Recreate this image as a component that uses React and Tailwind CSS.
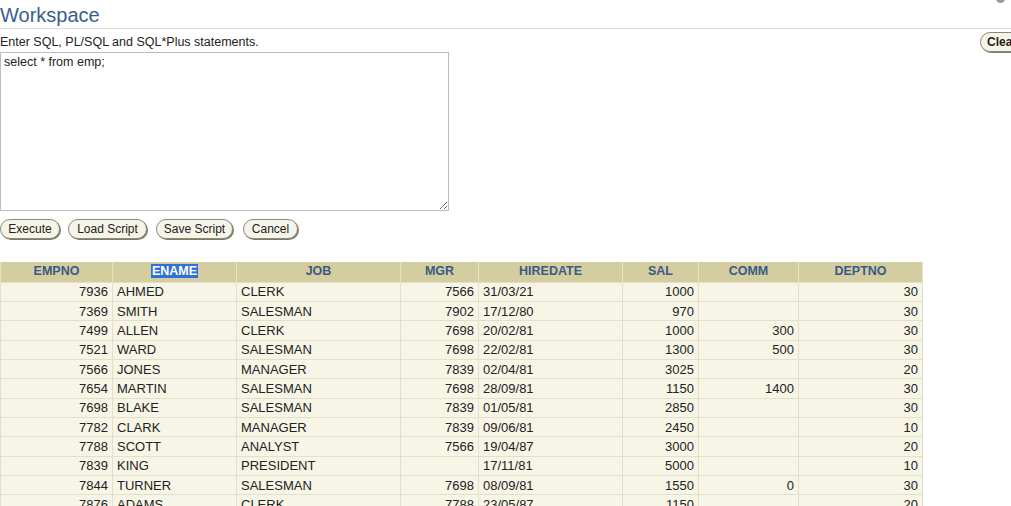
import React from 'react';

const columns = [
    { key: 'empno', label: 'EMPNO', width: 'w-[112px]', align: 'text-right' },
    { key: 'ename', label: 'ENAME', width: 'w-[124px]', align: 'text-left' },
    { key: 'job', label: 'JOB', width: 'w-[164px]', align: 'text-left' },
    { key: 'mgr', label: 'MGR', width: 'w-[78px]', align: 'text-right' },
    { key: 'hiredate', label: 'HIREDATE', width: 'w-[144px]', align: 'text-left' },
    { key: 'sal', label: 'SAL', width: 'w-[76px]', align: 'text-right' },
    { key: 'comm', label: 'COMM', width: 'w-[100px]', align: 'text-right' },
    { key: 'deptno', label: 'DEPTNO', width: 'w-[124px]', align: 'text-right' },
];

const rows = [
    ['7936', 'AHMED', 'CLERK', '7566', '31/03/21', '1000', '', '30'],
    ['7369', 'SMITH', 'SALESMAN', '7902', '17/12/80', '970', '', '30'],
    ['7499', 'ALLEN', 'CLERK', '7698', '20/02/81', '1000', '300', '30'],
    ['7521', 'WARD', 'SALESMAN', '7698', '22/02/81', '1300', '500', '30'],
    ['7566', 'JONES', 'MANAGER', '7839', '02/04/81', '3025', '', '20'],
    ['7654', 'MARTIN', 'SALESMAN', '7698', '28/09/81', '1150', '1400', '30'],
    ['7698', 'BLAKE', 'SALESMAN', '7839', '01/05/81', '2850', '', '30'],
    ['7782', 'CLARK', 'MANAGER', '7839', '09/06/81', '2450', '', '10'],
    ['7788', 'SCOTT', 'ANALYST', '7566', '19/04/87', '3000', '', '20'],
    ['7839', 'KING', 'PRESIDENT', '', '17/11/81', '5000', '', '10'],
    ['7844', 'TURNER', 'SALESMAN', '7698', '08/09/81', '1550', '0', '30'],
    ['7876', 'ADAMS', 'CLERK', '7788', '23/05/87', '1150', '', '20'],
];

const PillButton = ({ children, className = '' }) => (
    <button className={`h-[20px] shrink-0 whitespace-nowrap rounded-full border border-[#8a8a78] bg-[#f6f4e8] px-[6px] text-[12px] leading-none text-[#222] shadow-[1px_1px_0_#7d7b68] ${className}`}>
        {children}
    </button>
);

export default function App() {
    return (
        <div className="relative h-[506px] w-[1011px] overflow-hidden bg-white font-['Liberation_Sans',Arial,sans-serif] text-[#222]">
            {/* corner icon fragment */}
            <div className="absolute right-[6px] top-[-6px] h-[9px] w-[9px] rounded-full bg-[#9a9a9a]" />

            {/* Title */}
            <div className="h-[29px] border-b border-[#dcdcdc] pt-[4px]">
                <h1 className="text-[20px] leading-[23px] text-[#3b5d8f]">Workspace</h1>
            </div>

            {/* Instructions + Clear */}
            <div className="flex h-[22px] items-center justify-between">
                <p className="pt-[4px] text-[12.5px]">Enter SQL, PL/SQL and SQL*Plus statements.</p>
                <div className="mr-[-13px] mt-[2px]">
                    <PillButton className="font-bold">Clear</PillButton>
                </div>
            </div>

            {/* SQL input */}
            <div className="mt-[1px]">
                <textarea
                    className="block h-[159px] w-[449px] resize-both border border-[#bdbdbd] px-[3px] py-[1px] text-[12.5px] leading-[16px] text-[#222] outline-none"
                    defaultValue="select * from emp;"
                />
            </div>

            {/* Action buttons */}
            <div className="mt-[8px] flex">
                <PillButton className="w-[60px] px-0">Execute</PillButton>
                <PillButton className="ml-[8px] w-[79px] px-0">Load Script</PillButton>
                <PillButton className="ml-[9px] w-[77px] px-0">Save Script</PillButton>
                <PillButton className="ml-[10px] w-[55px] px-0">Cancel</PillButton>
            </div>

            {/* Results */}
            <table className="mt-[23px] w-[922px] table-fixed border-collapse text-[13px]">
                <thead>
                    <tr className="h-[20px] bg-[#d3cd9f]">
                        {columns.map((col) => (
                            <th key={col.key} className={`${col.width} border-x border-[#e6e2c4] p-0 text-center text-[12.5px] font-bold text-[#3b5a86]`}>
                                {col.key === 'ename' ? (
                                    <span className="bg-[#2f6fd8] px-[1px] text-white">{col.label}</span>
                                ) : (
                                    col.label
                                )}
                            </th>
                        ))}
                    </tr>
                </thead>
                <tbody>
                    {rows.map((row) => (
                        <tr key={row[0]} className="h-[19.35px] bg-[#f7f5e6]">
                            {row.map((cell, i) => (
                                <td
                                    key={i}
                                    className={`${columns[i].align} border border-[#e2dfca] px-[4px] py-0 leading-[17px]`}
                                >
                                    {cell}
                                </td>
                            ))}
                        </tr>
                    ))}
                </tbody>
            </table>
        </div>
    );
}
